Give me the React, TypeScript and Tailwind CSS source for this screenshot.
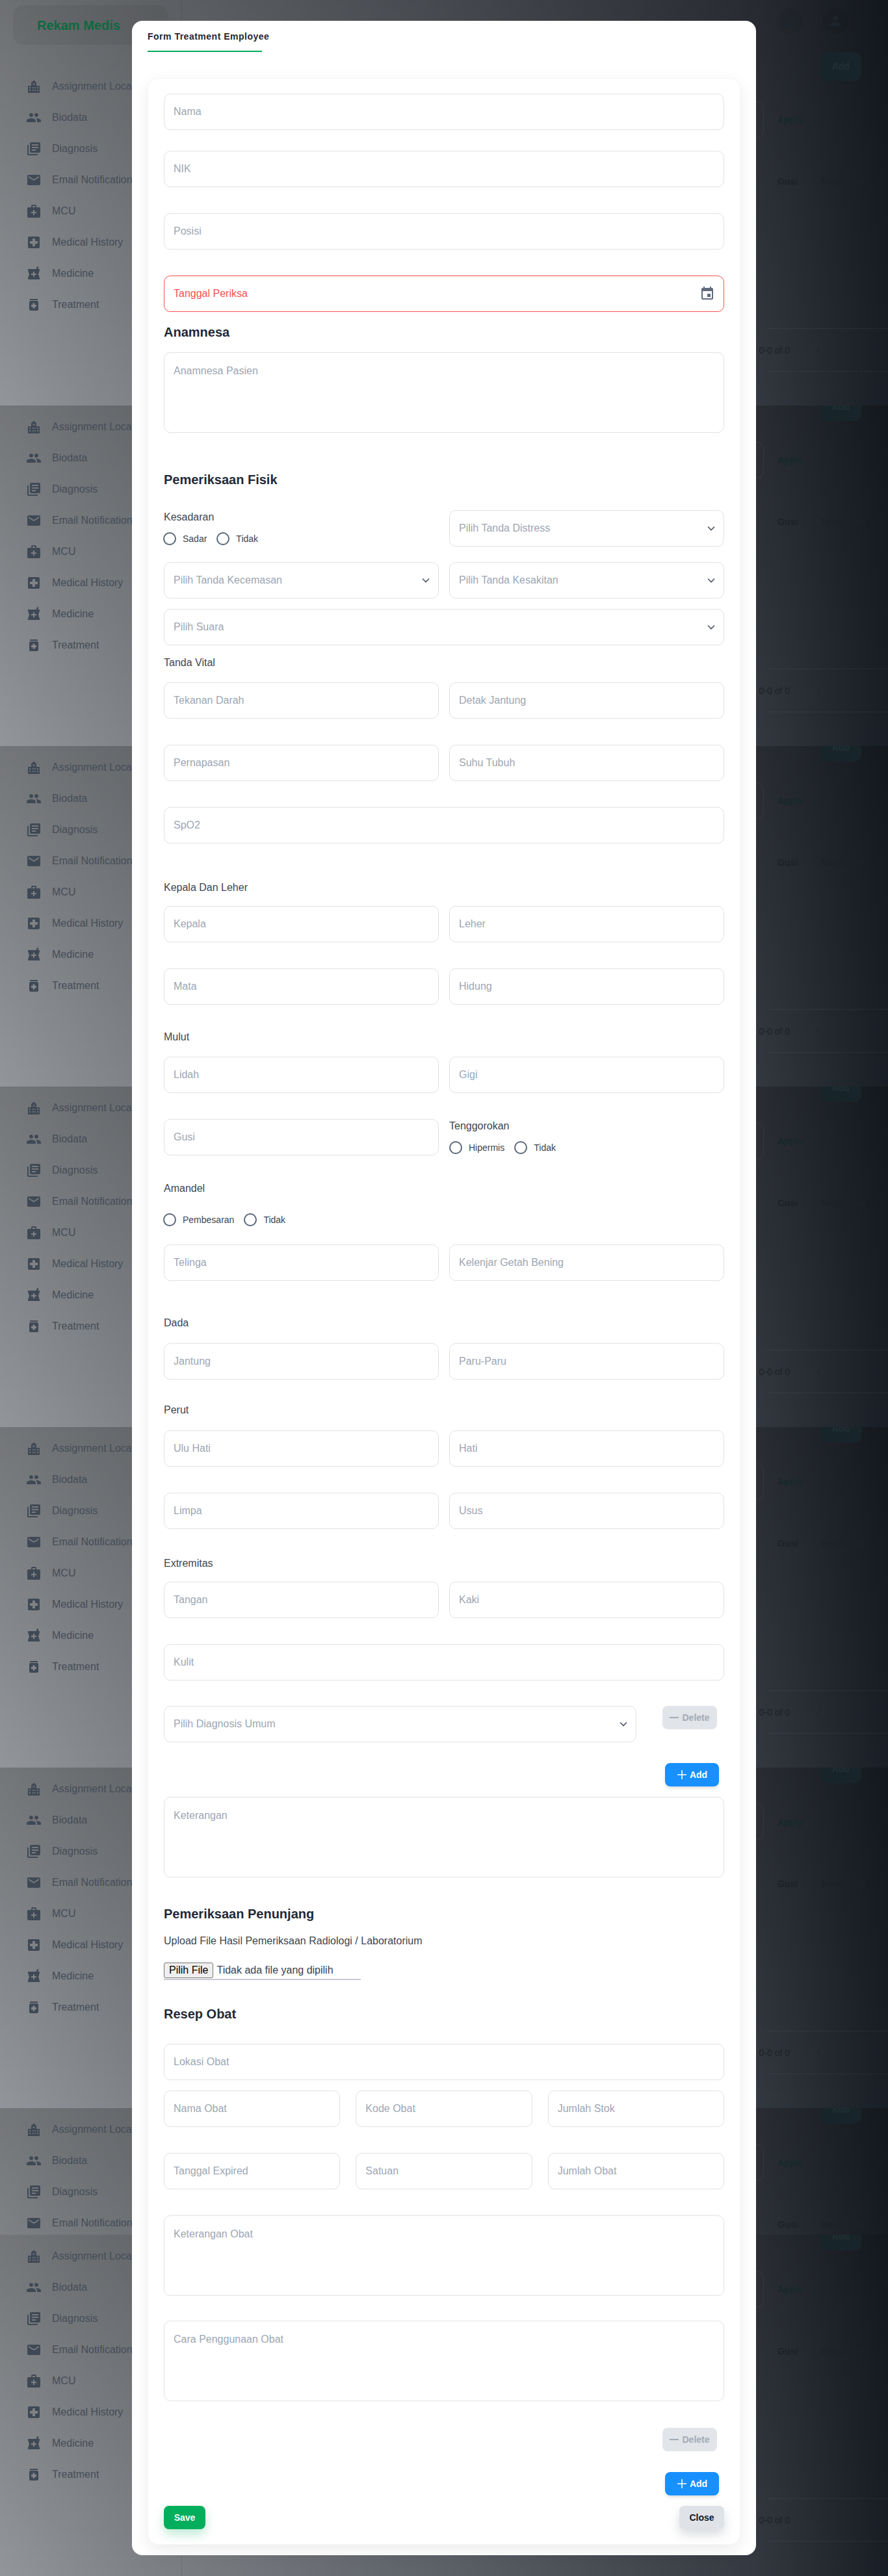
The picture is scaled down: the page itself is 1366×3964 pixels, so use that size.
import React from 'react';
import { MdApps, MdEmail, MdEvent, MdLibraryBooks, MdLocalHospital, MdLocalPharmacy, MdMedicalServices, MdMedication, MdPeople, MdPerson } from 'react-icons/md';

function BuildingIcon({ className }: { className?: string }) {
  return (
    <svg viewBox="0 0 24 24" fill="currentColor" fillRule="evenodd" className={className}>
      <path d="M3 11h5V6l4-3.5L16 6v5h5v11H3V11zM10.5 7.5v2h3v-2h-3zM5 13v2h2v-2H5zm0 4v2h2v-2H5zm5-4v2h1.5v-2H10zm3 0v2h1.5v-2H13zm-3 4v2h1.5v-2H10zm3 0v2h1.5v-2H13zm4-4v2h2v-2h-2zm0 4v2h2v-2h-2z" />
    </svg>
  );
}

const menu = [
  { label: 'Assignment Location', Icon: BuildingIcon },
  { label: 'Biodata', Icon: MdPeople },
  { label: 'Diagnosis', Icon: MdLibraryBooks },
  { label: 'Email Notification', Icon: MdEmail },
  { label: 'MCU', Icon: MdMedicalServices },
  { label: 'Medical History', Icon: MdLocalHospital },
  { label: 'Medicine', Icon: MdLocalPharmacy },
  { label: 'Treatment', Icon: MdMedication },
];

// One screen of the page behind the dialog, it repeats down the whole shot
function BackPage() {
  return (
    <div className="flex h-[624px] bg-gradient-to-b from-black/25 to-transparent">
      <aside className="w-[280px] shrink-0 border-r border-black/10 pt-2">
        <div className="ml-5 mr-5 flex h-[61px] items-center rounded-2xl bg-black/5 pl-[37px] text-xl font-bold text-[#0d6a40]">
          Rekam Medis
        </div>
        <nav className="mt-10">
          {menu.map(({ label, Icon }) => (
            <div key={label} className="flex h-12 items-center gap-4 pl-10 text-base text-[#454c57]">
              <Icon className="h-6 w-6 shrink-0 text-[#3f4956]" />
              <span className="whitespace-nowrap">{label}</span>
            </div>
          ))}
        </nav>
      </aside>
      <main className="flex-1 text-[#1c2128]">
        <div className="flex justify-end gap-[30px] pr-[61px] pt-3">
          <div className="flex h-10 w-10 items-center justify-center rounded-full bg-black/5">
            <MdApps className="h-7 w-7 text-[#1e242b]" />
          </div>
          <div className="flex h-10 w-10 items-center justify-center rounded-full bg-black/5">
            <MdPerson className="h-6 w-6 text-[#1e242b]" />
          </div>
        </div>
        <div className="mt-7 flex justify-end pr-[41px]">
          <div className="flex h-11 w-16 items-center justify-center rounded-[10px] bg-[#17252b] text-sm font-bold text-[#232f34]">
            Add
          </div>
        </div>
        <div className="mt-8 flex h-14 items-center justify-end pr-[131px]">
          <div className="h-14 w-40 rounded-[10px] border border-white/5" />
          <span className="ml-[21px] w-[39px] text-sm font-bold text-[#16282c]">Apply</span>
        </div>
        <div className="mt-[57px] flex h-6 justify-end pr-[33px] text-sm font-bold">
          <div className="flex w-[137px] gap-[34px] overflow-hidden whitespace-nowrap">
            <span>Gusi</span>
            <span>Tenggorokan</span>
          </div>
        </div>
        <div className="mt-[198px] flex justify-end pr-[39px]">
          <div className="h-0 w-0 border-y-[5px] border-l-[5px] border-y-transparent border-l-[#1c2128]" />
        </div>
        <div className="ml-auto mt-[4px] w-[186px] border-t border-white/5" />
        <div className="mt-[21px] flex h-6 items-center justify-end pr-[55px] text-sm">
          <span className="mr-10">0-0 of 0</span>
          <svg viewBox="0 0 8 12" fill="none" stroke="#22272e" strokeWidth="1.5" className="mr-10 h-3 w-2">
            <path d="M7 1L2 6l5 5" />
          </svg>
          <svg viewBox="0 0 8 12" fill="none" stroke="#22272e" strokeWidth="1.5" className="h-3 w-2">
            <path d="M1 1l5 5-5 5" />
          </svg>
        </div>
        <div className="ml-auto mt-5 w-[186px] border-t border-white/5" />
      </main>
    </div>
  );
}

function Band({ className }: { className: string }) {
  return (
    <div className={`overflow-hidden ${className}`}>
      <div className="-mt-[100px]">
        <BackPage />
      </div>
    </div>
  );
}

function Field({ placeholder, className = '' }: { placeholder: string; className?: string }) {
  return (
    <input
      placeholder={placeholder}
      className={`h-14 w-full rounded-[10px] border border-[#e0e2e6] bg-white px-[14px] text-base outline-none placeholder:text-[#9ca6b3] ${className}`}
    />
  );
}

function Area({ placeholder, className = '' }: { placeholder: string; className?: string }) {
  return (
    <textarea
      placeholder={placeholder}
      className={`block h-[124px] w-full resize-none rounded-[10px] border border-[#e0e2e6] bg-white px-[14px] pt-4 text-base outline-none placeholder:text-[#9ca6b3] ${className}`}
    />
  );
}

function Pick({ placeholder, className = '' }: { placeholder: string; className?: string }) {
  return (
    <div className={`flex h-14 items-center justify-between rounded-[10px] border border-[#e0e2e6] bg-white pl-[14px] pr-[13px] text-base text-[#9ca6b3] ${className}`}>
      <span>{placeholder}</span>
      <svg viewBox="0 0 12 8" fill="none" stroke="#4b5563" strokeWidth="1.6" className="h-2 w-3">
        <path d="M1 1.5l5 5 5-5" />
      </svg>
    </div>
  );
}

function Radios({ options, className = '' }: { options: string[]; className?: string }) {
  return (
    <div className={`flex items-center ${className}`}>
      {options.map(o => (
        <label key={o} className="mr-[15px] flex items-center gap-[10px] text-sm text-[#3d4550]">
          <span className="h-5 w-5 rounded-full border-2 border-[#5a6878]" />
          {o}
        </label>
      ))}
    </div>
  );
}

function Title({ children, className = '' }: { children: React.ReactNode; className?: string }) {
  return <h2 className={`text-xl font-bold leading-7 text-[#1f2937] ${className}`}>{children}</h2>;
}

function Label({ children, className = '' }: { children: React.ReactNode; className?: string }) {
  return <p className={`text-base leading-6 text-[#3d4550] ${className}`}>{children}</p>;
}

function DeleteButton({ className = '' }: { className?: string }) {
  return (
    <button className={`flex h-9 w-[84px] items-center justify-center gap-[5px] rounded-lg bg-[#e1e4e8] text-sm font-bold text-[#a3abb5] ${className}`}>
      <span className="h-0.5 w-[14px] bg-[#a3abb5]" />
      Delete
    </button>
  );
}

function AddButton({ className = '' }: { className?: string }) {
  return (
    <button className={`flex h-9 w-[83px] items-center justify-center gap-1 rounded-lg bg-[#1890ff] text-sm font-bold text-white shadow-md ${className}`}>
      <svg viewBox="0 0 16 16" stroke="currentColor" strokeWidth="1.6" className="h-4 w-4">
        <path d="M8 1v14M1 8h14" />
      </svg>
      Add
    </button>
  );
}

function Form() {
  return (
    <div className="mx-6 mt-10 h-[3796px] rounded-2xl border border-[#f6f6f7] bg-white px-6 pt-[23px] shadow-[0_8px_24px_rgba(0,0,0,0.08)]">
      <Field placeholder="Nama" />
      <Field placeholder="NIK" className="mt-8" />
      <Field placeholder="Posisi" className="mt-10" />
      <div className="relative mt-10">
        <Field placeholder="Tanggal Periksa" className="border-[#f8514f] placeholder:text-[#f8514f]" />
        <MdEvent className="absolute right-[14px] top-4 h-6 w-6 text-[#5f6b7a]" />
      </div>

      <Title className="mt-[17px]">Anamnesa</Title>
      <Area placeholder="Anamnesa Pasien" className="mt-[17px]" />

      <Title className="mt-[58px]">Pemeriksaan Fisik</Title>
      <div className="mt-[33px] grid grid-cols-2 gap-4">
        <div>
          <Label className="-mt-px">Kesadaran</Label>
          <Radios options={['Sadar', 'Tidak']} className="mt-[11px] -ml-px" />
        </div>
        <Pick placeholder="Pilih Tanda Distress" />
      </div>
      <div className="mt-6 grid grid-cols-2 gap-4">
        <Pick placeholder="Pilih Tanda Kecemasan" />
        <Pick placeholder="Pilih Tanda Kesakitan" />
      </div>
      <Pick placeholder="Pilih Suara" className="mt-4" />

      <Label className="mt-[15px]">Tanda Vital</Label>
      <div className="mt-[18px] grid grid-cols-2 gap-4">
        <Field placeholder="Tekanan Darah" />
        <Field placeholder="Detak Jantung" />
      </div>
      <div className="mt-10 grid grid-cols-2 gap-4">
        <Field placeholder="Pernapasan" />
        <Field placeholder="Suhu Tubuh" />
      </div>
      <Field placeholder="SpO2" className="mt-10" />

      <Label className="mt-14">Kepala Dan Leher</Label>
      <div className="mt-4 grid grid-cols-2 gap-4">
        <Field placeholder="Kepala" />
        <Field placeholder="Leher" />
      </div>
      <div className="mt-10 grid grid-cols-2 gap-4">
        <Field placeholder="Mata" />
        <Field placeholder="Hidung" />
      </div>

      <Label className="mt-[38px]">Mulut</Label>
      <div className="mt-[18px] grid grid-cols-2 gap-4">
        <Field placeholder="Lidah" />
        <Field placeholder="Gigi" />
      </div>
      <div className="mt-10 grid grid-cols-2 gap-4">
        <Field placeholder="Gusi" />
        <div>
          <Label className="-mt-px">Tenggorokan</Label>
          <Radios options={['Hipermis', 'Tidak']} className="mt-[11px]" />
        </div>
      </div>

      <Label className="mt-[39px]">Amandel</Label>
      <Radios options={['Pembesaran', 'Tidak']} className="mt-[26px] -ml-px" />
      <div className="mt-[28px] grid grid-cols-2 gap-4">
        <Field placeholder="Telinga" />
        <Field placeholder="Kelenjar Getah Bening" />
      </div>

      <Label className="mt-[53px]">Dada</Label>
      <div className="mt-[19px] grid grid-cols-2 gap-4">
        <Field placeholder="Jantung" />
        <Field placeholder="Paru-Paru" />
      </div>

      <Label className="mt-[35px]">Perut</Label>
      <div className="mt-[19px] grid grid-cols-2 gap-4">
        <Field placeholder="Ulu Hati" />
        <Field placeholder="Hati" />
      </div>
      <div className="mt-10 grid grid-cols-2 gap-4">
        <Field placeholder="Limpa" />
        <Field placeholder="Usus" />
      </div>

      <Label className="mt-[41px]">Extremitas</Label>
      <div className="mt-4 grid grid-cols-2 gap-4">
        <Field placeholder="Tangan" />
        <Field placeholder="Kaki" />
      </div>
      <Field placeholder="Kulit" className="mt-10" />

      <div className="mt-[39px] flex items-start justify-between pr-[11px]">
        <Pick placeholder="Pilih Diagnosis Umum" className="w-[727px]" />
        <DeleteButton />
      </div>
      <div className="mt-8 flex justify-end pr-2">
        <AddButton />
      </div>
      <Area placeholder="Keterangan" className="mt-4" />

      <Title className="mt-[42px]">Pemeriksaan Penunjang</Title>
      <Label className="mt-4">Upload File Hasil Pemeriksaan Radiologi / Laboratorium</Label>
      <div className="mt-[21px] flex h-[27px] w-[303px] items-start gap-[5px] border-b-2 border-[#c9ccd3] text-base text-[#374151]">
        <button className="h-6 rounded-[3px] border border-[#767676] bg-[#efefef] px-[7px] leading-none text-black">Pilih File</button>
        <span className="leading-6">Tidak ada file yang dipilih</span>
      </div>

      <Title className="mt-[38px]">Resep Obat</Title>
      <Field placeholder="Lokasi Obat" className="mt-8" />
      <div className="mt-4 grid grid-cols-3 gap-6">
        <Field placeholder="Nama Obat" />
        <Field placeholder="Kode Obat" />
        <Field placeholder="Jumlah Stok" />
      </div>
      <div className="mt-10 grid grid-cols-3 gap-6">
        <Field placeholder="Tanggal Expired" />
        <Field placeholder="Satuan" />
        <Field placeholder="Jumlah Obat" />
      </div>
      <Area placeholder="Keterangan Obat" className="mt-10" />
      <Area placeholder="Cara Penggunaan Obat" className="mt-[38px]" />
      <div className="mt-[41px] flex justify-end pr-[11px]">
        <DeleteButton />
      </div>
      <div className="mt-8 flex justify-end pr-2">
        <AddButton />
      </div>
      <div className="mt-4 flex justify-between">
        <button className="h-9 w-16 rounded-lg bg-[#00ae5b] text-sm font-bold text-white shadow-[0_8px_16px_rgba(0,174,91,0.25)]">Save</button>
        <button className="h-9 w-[69px] rounded-lg bg-[#dfe2e6] text-sm font-bold text-[#111827] shadow-[0_8px_16px_rgba(100,110,125,0.25)]">Close</button>
      </div>
    </div>
  );
}

export default function App() {
  return (
    <div className="relative h-[3964px] w-[1366px] overflow-hidden bg-[linear-gradient(to_right,#929599,#7f8387_15%,#5c6067_50%,#343840_85%,#181e25)] font-['Liberation_Sans',Arial,sans-serif]">
      <div className="h-[624px] overflow-hidden">
        <BackPage />
      </div>
      <Band className="h-[524px]" />
      <Band className="h-[524px]" />
      <Band className="h-[524px]" />
      <Band className="h-[524px]" />
      <Band className="h-[524px]" />
      <Band className="h-[195px]" />
      <Band className="h-[525px]" />

      {/* dialog */}
      <div className="absolute left-[203px] top-8 h-[3900px] w-[960px] rounded-2xl bg-white">
        <div className="mx-6 w-[176px] border-b-2 border-[#00ae5b] pb-[14px] pt-4">
          <p className="whitespace-nowrap text-sm font-bold leading-[16px] tracking-[0.5px] text-[#1f2937]">Form Treatment Employee</p>
        </div>
        <Form />
      </div>
    </div>
  );
}
